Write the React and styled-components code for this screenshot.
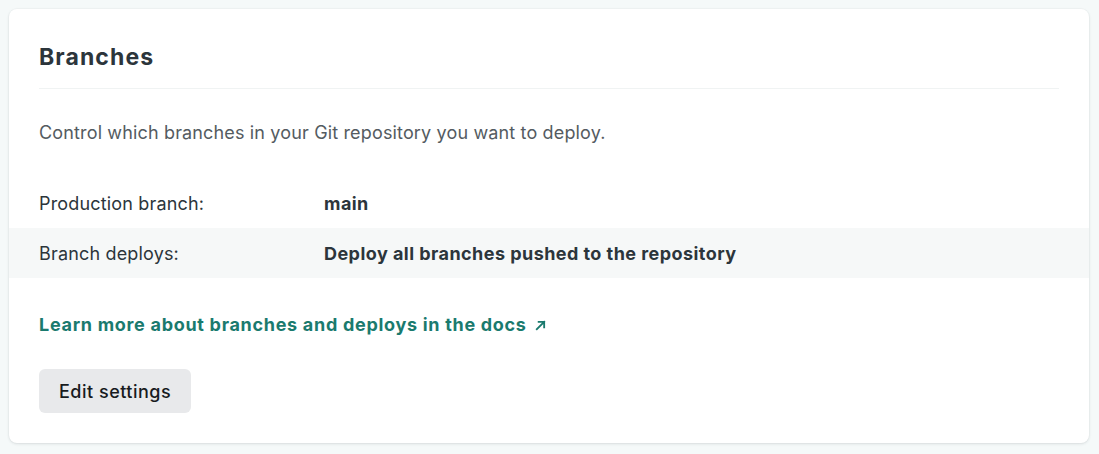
import React from "react";
import styled, { createGlobalStyle } from "styled-components";

const Global = createGlobalStyle`
  html, body { margin: 0; padding: 0; background: #f5f9f9; }
  body { font-family: Inter, "Noto Sans", sans-serif; -webkit-font-smoothing: antialiased; }
`;

const Page = styled.div`
  padding: 9px 10px 11px 9px;
`;

const Card = styled.section`
  background: #ffffff;
  border-radius: 8px;
  box-shadow: 0 1px 3px rgba(30, 50, 60, 0.12), 0 0 0 1px rgba(30, 50, 60, 0.02);
  padding: 32px 30px 30px;
  overflow: hidden;
`;

const Header = styled.header`
  border-bottom: 1px solid #f0f3f3;
  padding-bottom: 15px;
`;

const Title = styled.h2`
  margin: 0;
  font-size: 23px;
  line-height: 32px;
  font-weight: 700;
  color: #2c353b;
  letter-spacing: 1.1px;
`;

const Description = styled.p`
  margin: 32px 0 0;
  font-size: 18px;
  line-height: 24px;
  color: #545b61;
  letter-spacing: 0.15px;
`;

const Rows = styled.dl`
  margin: 33px -30px 0;
`;

const Row = styled.div`
  display: grid;
  grid-template-columns: 285px 1fr;
  align-items: center;
  height: 50px;
  padding: 0 30px;
  background: ${(p) => (p.$shaded ? "#f6f8f8" : "transparent")};
`;

const Label = styled.dt`
  font-size: 18px;
  color: #2c353b;
  letter-spacing: 0.17px;
`;

const Value = styled.dd`
  margin: 0;
  font-size: 18px;
  font-weight: 700;
  color: #2c353b;
  letter-spacing: 0.45px;
`;

const DocsLink = styled.a`
  display: inline-flex;
  align-items: center;
  gap: 8px;
  margin-top: 35px;
  font-size: 18px;
  line-height: 24px;
  font-weight: 700;
  color: #1a7a6e;
  text-decoration: none;
  letter-spacing: 0.7px;
`;

const Actions = styled.div`
  margin-top: 32px;
`;

const Button = styled.button`
  font-family: inherit;
  height: 44px;
  padding: 0 20px;
  border: none;
  border-radius: 6px;
  background: #e8e9eb;
  color: #181b1e;
  font-size: 18px;
  font-weight: 500;
  letter-spacing: 0.5px;
  cursor: pointer;
`;

const Arrow = () => (
  <svg width="11" height="11" viewBox="0 0 12 12" fill="none">
    <path d="M2 10L10 2M4 2h6v6" stroke="#1a7a6e" strokeWidth="2" strokeLinecap="square" />
  </svg>
);

export default function App() {
  return (
    <>
      <Global />
      <Page>
        <Card>
          <Header>
            <Title>Branches</Title>
          </Header>
          <Description>Control which branches in your Git repository you want to deploy.</Description>
          <Rows>
            <Row>
              <Label>Production branch:</Label>
              <Value>main</Value>
            </Row>
            <Row $shaded>
              <Label>Branch deploys:</Label>
              <Value>Deploy all branches pushed to the repository</Value>
            </Row>
          </Rows>
          <DocsLink href="#">
            Learn more about branches and deploys in the docs <Arrow />
          </DocsLink>
          <Actions>
            <Button>Edit settings</Button>
          </Actions>
        </Card>
      </Page>
    </>
  );
}
